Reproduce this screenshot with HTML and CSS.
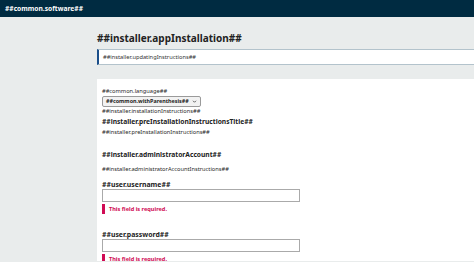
FILE: index.html
```html
<!DOCTYPE html>
<html>
<head>
<meta charset="utf-8">
<link rel="stylesheet" href="styles.css">
</head>
<body>
<header class="topbar"><span class="brand">##common.software##</span></header>
<main class="main">
  <h1 class="title">##installer.appInstallation##</h1>
  <div class="notice">##installer.updatingInstructions##</div>
  <section class="panel">
    <div class="small">##common.language##</div>
    <div class="selectbox"><span>##common.withParenthesis##</span><svg class="chev" viewBox="0 0 10 10" width="5" height="5"><path d="M2 3.5 L5 6.5 L8 3.5" fill="none" stroke="#333" stroke-width="1.5"/></svg></div>
    <div class="small">##installer.installationInstructions##</div>
    <div class="subhead">##installer.preInstallationInstructionsTitle##</div>
    <div class="small">##installer.preInstallationInstructions##</div>
    <div class="section-head">##installer.administratorAccount##</div>
    <div class="small instr">##installer.administratorAccountInstructions##</div>
    <div class="field">
      <div class="label">##user.username##</div>
      <div class="input"></div>
      <div class="error">This field is required.</div>
    </div>
    <div class="field">
      <div class="label">##user.password##</div>
      <div class="input"></div>
      <div class="error">This field is required.</div>
    </div>
  </section>
</main>
</body>
</html>
```
FILE: styles.css
```css
html, body { margin: 0; padding: 0; }
body {
  font-family: "Noto Sans", sans-serif;
  background: #e9ecec;
  color: #222;
  width: 474px;
  height: 262px;
  overflow: hidden;
}
.topbar {
  height: 17px;
  background: #002b41;
  display: flex;
  align-items: center;
  padding-left: 5px;
}
.brand { color: #fff; font-weight: 700; font-size: 6.7px; }
.main { padding-left: 97px; padding-top: 11px; }
.title { margin: 0; font-size: 10px; font-weight: 700; color: #222; line-height: 20px; height: 21px; }
.notice {
  background: #fff;
  border-top: 1px solid #b3c3cc;
  border-bottom: 1px solid #b3c3cc;
  border-left: 2px solid #1b4f8a;
  height: 14px;
  display: flex;
  align-items: center;
  padding-left: 4px;
  font-size: 5.7px;
  color: #333;
}
.panel {
  margin-top: 14px;
  background: #fff;
  padding: 8px 5px 0 5px;
  height: 174px;
  overflow: hidden;
}
.small { font-size: 5.7px; color: #2a2a2a; line-height: 9px; }
.selectbox {
  display: flex;
  width: max-content;
  align-items: center;
  gap: 3px;
  height: 9px;
  padding: 0 3px 0 3px;
  border: 1px solid #9a9a9a;
  border-radius: 2px;
  background: #f2f2f2;
  font-size: 5.4px;
  font-weight: 700;
  line-height: 9px;
  color: #222;
}
.chev { display: block; }
.subhead { font-size: 6.7px; font-weight: 700; line-height: 12px; color: #222; }
.section-head { font-size: 6.7px; font-weight: 700; margin-top: 12px; line-height: 11px; color: #222; }
.instr { margin-top: 5px; }
.field { margin-top: 6px; }
.field + .field { margin-top: 16px; }
.label { font-size: 6.9px; font-weight: 700; line-height: 9px; color: #222; }
.input {
  width: 196px;
  height: 11px;
  border: 1px solid #aaa;
}
.error {
  margin-top: 2px;
  border-left: 3px solid #d00b54;
  padding-left: 4px;
  height: 10px;
  display: flex;
  align-items: center;
  color: #d00b54;
  font-weight: 700;
  font-size: 5.6px;
}
```
